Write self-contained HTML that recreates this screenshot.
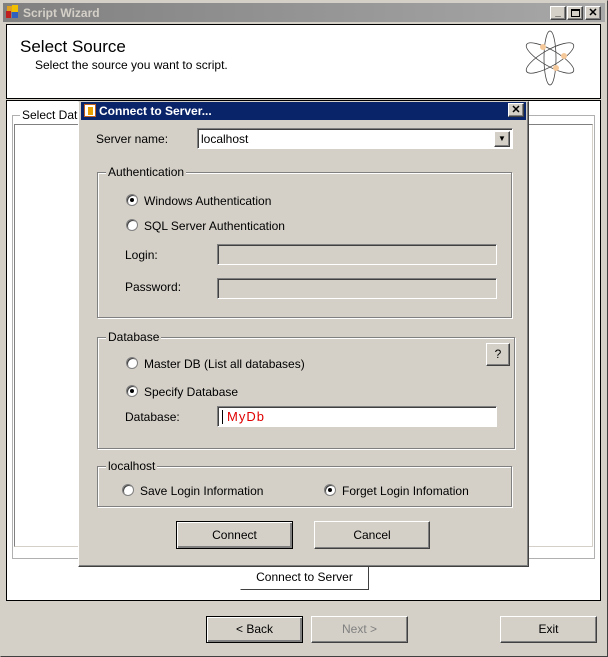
<!DOCTYPE html>
<html><head><meta charset="utf-8"><style>
*{box-sizing:border-box;margin:0;padding:0}
body{width:608px;height:657px;background:#d4d0c8;font-family:"Liberation Sans",sans-serif;font-size:12px;color:#000;position:relative;overflow:hidden}
.a{position:absolute}
.t{position:absolute;white-space:nowrap;line-height:14px}
.grp{position:absolute;border:1px solid #808080;box-shadow:1px 1px 0 #fff inset,1px 1px 0 #fff}
.gl{position:absolute;top:-8px;left:8px;background:#d4d0c8;padding:0 2px;line-height:14px}
.btn{position:absolute;background:#d4d0c8;border:1px solid;border-color:#fff #404040 #404040 #fff;box-shadow:inset -1px -1px 0 #808080;text-align:center;font-size:12px}
.inp{position:absolute;background:#fff;border:1px solid;border-color:#808080 #fff #fff #808080;box-shadow:inset 1px 1px 0 #404040}
.dis{background:#d4d0c8}
.rad{position:absolute;width:12px;height:12px;border-radius:50%;background:#fff;border:1px solid #808080;box-shadow:inset 1px 1px 0 #404040}
.rad.on::after{content:"";position:absolute;left:3px;top:3px;width:4px;height:4px;border-radius:50%;background:#000}
</style></head><body>
<div class="a" style="left:0;top:0;width:608px;height:657px;border:1px solid;border-color:#d4d0c8 #404040 #404040 #d4d0c8"></div>
<div class="a" style="left:3px;top:3px;width:602px;height:19px;background:linear-gradient(90deg,#808080,#a8a8a8)"></div>
<div class="a" style="left:7px;top:6px;width:6px;height:6px;background:#e0a020"></div>
<div class="a" style="left:12px;top:5px;width:6px;height:7px;background:#f0c000"></div>
<div class="a" style="left:6px;top:11px;width:5px;height:7px;background:#c02020"></div>
<div class="a" style="left:12px;top:12px;width:6px;height:6px;background:#3060c0"></div>
<div class="t" style="left:23px;top:6px;color:#d4d0c8;font-weight:bold;font-size:12px">Script Wizard</div>
<div class="btn" style="left:550px;top:6px;width:16px;height:14px;font-size:10px;line-height:12px;font-weight:bold">_</div>
<div class="btn" style="left:567px;top:6px;width:16px;height:14px"><div class="a" style="left:3px;top:2px;width:9px;height:8px;border:1px solid #000;border-top-width:2px"></div></div>
<div class="btn" style="left:585px;top:6px;width:16px;height:14px;font-size:11px;line-height:12px;font-weight:bold">✕</div>

<div class="a" style="left:6px;top:24px;width:595px;height:75px;background:#fff;border:1px solid #000"></div>
<div class="t" style="left:20px;top:38px;font-size:17px;line-height:18px">Select Source</div>
<div class="t" style="left:35px;top:58px">Select the source you want to script.</div>
<svg class="a" style="left:520px;top:30px" width="60" height="56" viewBox="0 0 60 56"><g fill="none" stroke="#444" stroke-width="0.8"><ellipse cx="30" cy="28" rx="27" ry="8" transform="rotate(30 30 28)"/><ellipse cx="30" cy="28" rx="27" ry="8" transform="rotate(-30 30 28)"/><ellipse cx="30" cy="28" rx="6" ry="27"/></g><g fill="#f5c89a"><circle cx="23" cy="17" r="3"/><circle cx="44" cy="26" r="3"/><circle cx="36" cy="38" r="3"/></g></svg>

<div class="a" style="left:6px;top:100px;width:595px;height:501px;background:#fff;border:1px solid #000"></div>
<div class="a" style="left:12px;top:115px;width:583px;height:444px;border:1px solid #b0b0b0"></div>
<div class="t" style="left:20px;top:108px;background:#fff;padding:0 2px">Select Dat</div>
<div class="a" style="left:14px;top:124px;width:579px;height:423px;border:1px solid;border-color:#808080 #d4d0c8 #d4d0c8 #808080"></div>
<div class="a" style="left:240px;top:565px;width:129px;height:25px;background:#fff;border:1px solid;border-color:#fff #404040 #404040 #fff;text-align:center;line-height:23px">Connect to Server</div>

<div class="btn" style="left:206px;top:616px;width:97px;height:27px;line-height:25px;border-color:#000;box-shadow:inset 1px 1px 0 #fff,inset -2px -2px 0 #808080">&lt; Back</div>
<div class="btn" style="left:311px;top:616px;width:97px;height:27px;line-height:25px;color:#808080">Next &gt;</div>
<div class="btn" style="left:500px;top:616px;width:97px;height:27px;line-height:25px">Exit</div>

<!-- dialog -->
<div class="a" style="left:78px;top:101px;width:451px;height:466px;background:#d4d0c8;border:1px solid;border-color:#d4d0c8 #404040 #404040 #fff;box-shadow:inset -1px -1px 0 #808080"></div>
<div class="a" style="left:81px;top:102px;width:445px;height:18px;background:#0a246a"></div>
<div class="a" style="left:84px;top:104px;width:12px;height:13px;background:#fff;border:1px solid #c06020"><div class="a" style="left:3px;top:2px;width:5px;height:8px;background:#e8a000"></div></div>
<div class="t" style="left:99px;top:104px;color:#fff;font-weight:bold">Connect to Server...</div>
<div class="btn" style="left:508px;top:103px;width:16px;height:14px;font-size:11px;line-height:12px;font-weight:bold">✕</div>

<div class="t" style="left:96px;top:132px">Server name:</div>
<div class="inp" style="left:197px;top:128px;width:316px;height:21px"><div class="t" style="left:3px;top:3px">localhost</div>
<div class="btn" style="left:296px;top:2px;width:16px;height:16px;font-size:8px;line-height:14px">▼</div></div>

<div class="grp" style="left:97px;top:172px;width:415px;height:146px"><div class="gl">Authentication</div></div>
<div class="rad on" style="left:126px;top:194px"></div><div class="t" style="left:144px;top:194px">Windows Authentication</div>
<div class="rad" style="left:126px;top:219px"></div><div class="t" style="left:144px;top:219px">SQL Server Authentication</div>
<div class="t" style="left:125px;top:248px">Login:</div>
<div class="inp dis" style="left:217px;top:244px;width:280px;height:21px"></div>
<div class="t" style="left:125px;top:280px">Password:</div>
<div class="inp dis" style="left:217px;top:278px;width:280px;height:21px"></div>

<div class="grp" style="left:97px;top:337px;width:418px;height:112px"><div class="gl">Database</div></div>
<div class="btn" style="left:486px;top:343px;width:24px;height:23px;line-height:21px">?</div>
<div class="rad" style="left:126px;top:357px"></div><div class="t" style="left:144px;top:357px">Master DB (List all databases)</div>
<div class="rad on" style="left:126px;top:385px"></div><div class="t" style="left:144px;top:385px">Specify Database</div>
<div class="t" style="left:125px;top:410px">Database:</div>
<div class="inp" style="left:217px;top:406px;width:280px;height:21px"><div class="a" style="left:4px;top:3px;width:1px;height:14px;background:#000"></div><div class="t" style="left:9px;top:3px;color:#e00000;font-size:13px;letter-spacing:1px">MyDb</div></div>

<div class="grp" style="left:97px;top:466px;width:415px;height:41px"><div class="gl">localhost</div></div>
<div class="rad" style="left:122px;top:484px"></div><div class="t" style="left:140px;top:484px">Save Login Information</div>
<div class="rad on" style="left:324px;top:484px"></div><div class="t" style="left:342px;top:484px">Forget Login Infomation</div>

<div class="btn" style="left:176px;top:521px;width:117px;height:28px;line-height:26px;border-color:#000;box-shadow:inset 1px 1px 0 #fff,inset -2px -2px 0 #808080">Connect</div>
<div class="btn" style="left:314px;top:521px;width:116px;height:28px;line-height:26px">Cancel</div>
</body></html>
